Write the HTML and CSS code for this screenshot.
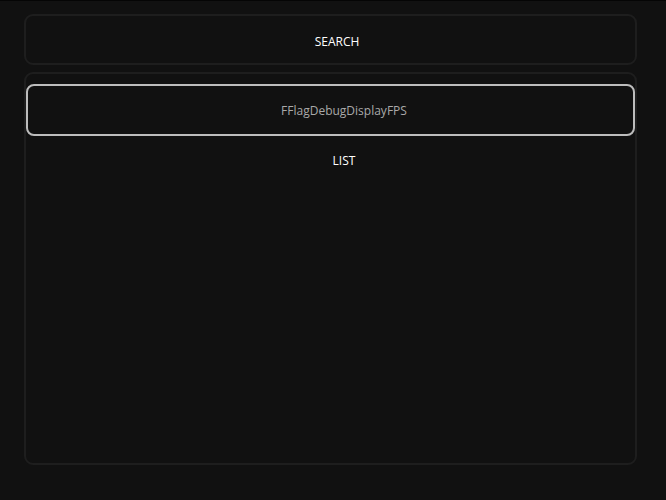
FILE: index.html
```html
<!DOCTYPE html>
<html>
<head>
<meta charset="utf-8">
<link rel="stylesheet" href="styles.css">
</head>
<body>
<div class="app">
  <div class="search-panel">SEARCH</div>
  <div class="list-panel">
    <div class="flag-input">FFlagDebugDisplayFPS</div>
    <div class="list-label">LIST</div>
  </div>
</div>
</body>
</html>
```

FILE: styles.css
```css
html, body {
  margin: 0;
  padding: 0;
  background: #111111;
  height: 100%;
}
body {
  border-top: 1px solid #050505;
  box-sizing: border-box;
  font-family: "Open Sans", "Noto Sans", sans-serif;
  font-size: 12px;
}
.app {
  display: flex;
  flex-direction: column;
  gap: 7px;
  padding: 13px 29px 0 24px;
}
.search-panel {
  height: 51px;
  box-sizing: border-box;
  border: 2px solid #1e1e1e;
  border-radius: 9px;
  display: flex;
  align-items: center;
  justify-content: center;
  padding: 3px 0 0 13px;
  color: #ffffff;
}
.list-panel {
  height: 393px;
  box-sizing: border-box;
  border: 2px solid #1e1e1e;
  border-radius: 9px;
  padding: 10px 0 0 0;
  display: flex;
  flex-direction: column;
  align-items: stretch;
}
.flag-input {
  height: 52px;
  box-sizing: border-box;
  border: 2px solid #bdbdbd;
  border-radius: 8px;
  display: flex;
  align-items: center;
  justify-content: center;
  padding-left: 27px;
  color: #a9a9a9;
}
.list-label {
  margin-top: 16px;
  padding-left: 27px;
  text-align: center;
  color: #ffffff;
}
```
